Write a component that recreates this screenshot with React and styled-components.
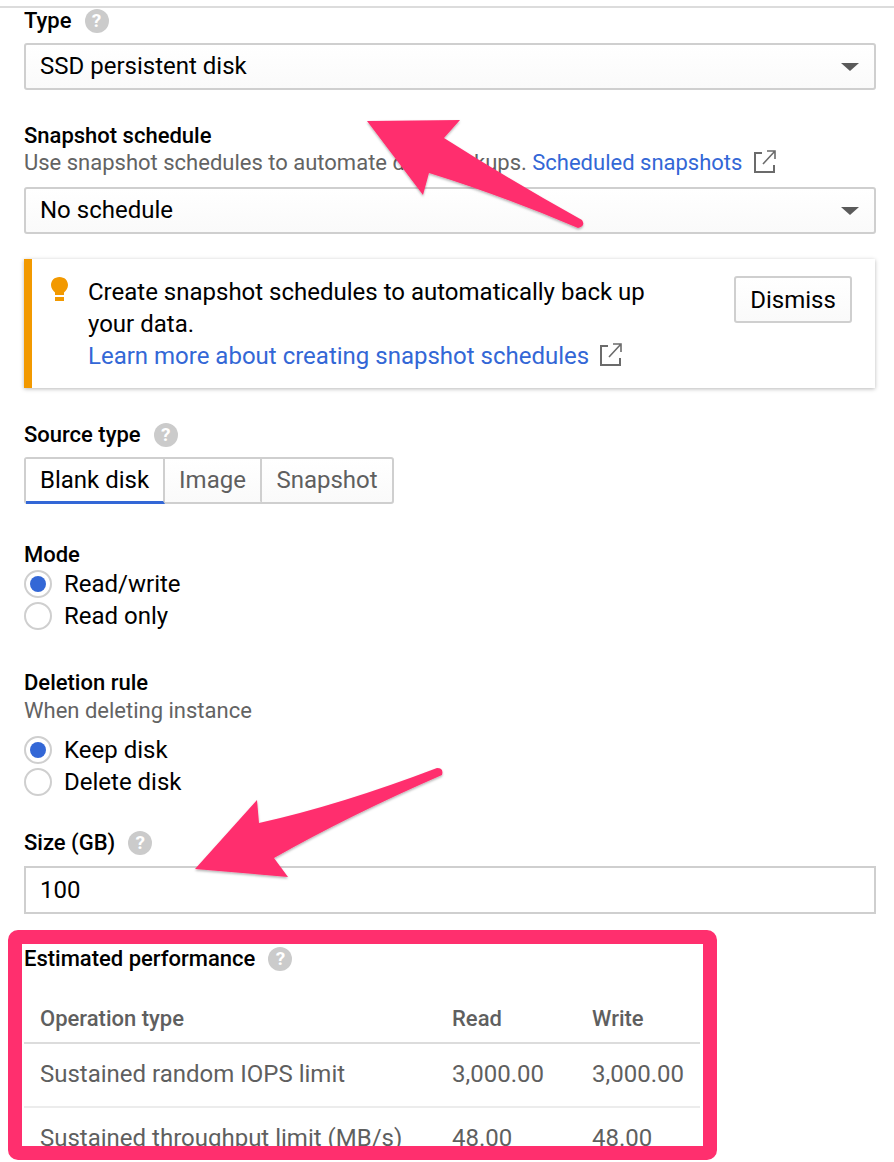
import React from 'react'
import styled, { createGlobalStyle } from 'styled-components'

const Global = createGlobalStyle`
  html, body {
    margin: 0;
    background: #fff;
    font-family: Roboto, "Liberation Sans", sans-serif;
    color: #000;
  }
  * { box-sizing: border-box; }
`

const Page = styled.div`
  position: relative;
  width: 894px;
  height: 1162px;
  overflow: hidden;
  padding: 6px 18px 0 24px;
  background: #fff;
`
const TopRule = styled.div`
  height: 2px;
  margin: 0 -18px 0 -24px;
  background: #dcdcdc;
`
const Section = styled.section`
  margin-top: ${(p) => p.$top || 0}px;
`
const Label = styled.div`
  display: flex;
  align-items: center;
  gap: 13px;
  height: 24px;
  padding-top: 1px;
  font-size: 22px;
  font-weight: 500;
  line-height: 24px;
`
const Help = styled.span`
  display: inline-flex;
  align-items: center;
  justify-content: center;
  width: 24px;
  height: 24px;
  border-radius: 50%;
  background: #cbcbcb;
  color: #fff;
  font-size: 19px;
  font-weight: 700;
`
const Hint = styled.div`
  display: flex;
  align-items: center;
  height: 28px;
  margin-top: ${(p) => p.$top || 0}px;
  padding-top: 2px;
  font-size: 22px;
  line-height: 26px;
  color: #636363;
`
const Link = styled.a`
  color: #3367d6;
`
const SelectBox = styled.div`
  position: relative;
  display: flex;
  align-items: center;
  height: 47px;
  margin-top: ${(p) => p.$top || 0}px;
  padding: 0 0 2px 14px;
  border: 2px solid #cfcfcf;
  border-radius: 3px;
  background: linear-gradient(#fff, #fafafa);
  font-size: 24px;
  &::after {
    content: '';
    position: absolute;
    right: 15px;
    top: 18px;
    border-left: 9px solid transparent;
    border-right: 9px solid transparent;
    border-top: 8px solid #5a5a5a;
  }
`
const Alert = styled.div`
  display: flex;
  justify-content: space-between;
  height: 129px;
  margin: 25px 1px 0 0;
  padding: 17px 23px 0 18px;
  background: #fff;
  border-left: 8px solid #f29900;
  box-shadow: 0 1px 4px rgba(0, 0, 0, 0.28);
`
const AlertBody = styled.div`
  display: flex;
  gap: 19px;
`
const Bulb = styled.svg`
  width: 19px;
  height: 26px;
  margin-top: 1px;
  flex: none;
`
const AlertText = styled.div`
  width: 590px;
  font-size: 24px;
  line-height: 32px;
`
const LinkLine = styled.div`
  display: flex;
  align-items: center;
  gap: 10px;
`
const OutIcon = styled.svg`
  width: 24px;
  height: 24px;
  margin-left: ${(p) => p.$left || 0}px;
  margin-top: -4px;
  flex: none;
`
const Dismiss = styled.button`
  width: 118px;
  height: 47px;
  border: 2px solid #cfcfcf;
  border-radius: 3px;
  background: linear-gradient(#fff, #fafafa);
  font-family: inherit;
  font-size: 24px;
  color: #000;
  padding: 0;
`
const Tabs = styled.div`
  display: inline-flex;
  height: 47px;
  margin-top: 11px;
  border: 2px solid #cfcfcf;
  border-radius: 3px;
  background: linear-gradient(#fff, #fafafa);
`
const Tab = styled.div`
  display: flex;
  align-items: center;
  justify-content: center;
  width: ${(p) => p.$w}px;
  margin-bottom: -2px;
  font-size: 24px;
  color: ${(p) => (p.$active ? '#000' : '#5f5f5f')};
  border-right: ${(p) => (p.$last ? '0' : '2px solid #cfcfcf')};
  border-bottom: 3px solid ${(p) => (p.$active ? '#3367d6' : 'transparent')};
  ${(p) => p.$active && 'background: #fff;'}
`
const RadioList = styled.div`
  display: flex;
  flex-direction: column;
  gap: 4px;
  margin-top: ${(p) => p.$top || 0}px;
`
const RadioRow = styled.div`
  display: flex;
  align-items: center;
  gap: 12px;
  height: 28px;
  font-size: 24px;
`
const RadioDot = styled.span`
  display: flex;
  align-items: center;
  justify-content: center;
  width: 28px;
  height: 28px;
  border: 2px solid #cfcfcf;
  border-radius: 50%;
  &::after {
    content: '';
    display: ${(p) => (p.$on ? 'block' : 'none')};
    width: 16px;
    height: 16px;
    border-radius: 50%;
    background: #3367d6;
  }
`
const TextBox = styled.div`
  display: flex;
  align-items: center;
  height: 48px;
  margin-top: 12px;
  padding-left: 14px;
  border: 2px solid #cfcfcf;
  font-size: 24px;
`
const Table = styled.table`
  width: 676px;
  margin-top: 23px;
  border-collapse: collapse;
  table-layout: fixed;
  font-size: 24px;
  color: #5f5f5f;
  th, td {
    padding: 0 0 0 16px;
    text-align: left;
    white-space: nowrap;
  }
  th {
    height: 50px;
    padding-top: 2px;
    font-size: 22px;
    font-weight: 500;
    border-bottom: 2px solid #dcdcdc;
  }
  td {
    height: 64px;
    padding-bottom: 2px;
    border-bottom: 2px solid #ececec;
  }
`
const Overlay = styled.svg`
  position: absolute;
  left: 0;
  top: 0;
  width: 894px;
  height: 1162px;
  pointer-events: none;
`

const OutLink = ({ left }) => (
  <OutIcon $left={left} viewBox="0 0 24 24" fill="none" stroke="#6b6b6b" strokeWidth="2">
    <path d="M9 4H2v19h19v-7" />
    <path d="M10 15L22 2M14 2h8v8" strokeWidth="1.6" />
  </OutIcon>
)

const rows = [
  ['Sustained random IOPS limit', '3,000.00', '3,000.00'],
  ['Sustained throughput limit (MB/s)', '48.00', '48.00'],
]

const App = () => {
  return (
    <Page>
      <Global />
      <TopRule />
      <Section>
        <Label>Type <Help>?</Help></Label>
        <SelectBox $top={11}>SSD persistent disk</SelectBox>
      </Section>
      <Section $top={33}>
        <Label>Snapshot schedule</Label>
        <Hint $top={1}>
          Use snapshot schedules to automate disk backups.&nbsp;<Link>Scheduled snapshots</Link>
          <OutLink left={11} />
        </Hint>
        <SelectBox $top={11}>No schedule</SelectBox>
      </Section>
      <Alert>
        <AlertBody>
          <Bulb viewBox="0 0 19 26">
            <path d="M9.5 0C4.300 0 1 3.600 1 8c0 3.200 2 5.600 4 7.500V18h9v-2.500c2-1.900 4-4.300 4-7.500 0-4.400-3.300-8-8.500-8z" fill="#f29900" />
            <rect x="5" y="20" width="9" height="4" fill="#f29900" />
          </Bulb>
          <AlertText>
            Create snapshot schedules to automatically back up your data.
            <LinkLine>
              <Link>Learn more about creating snapshot schedules</Link>
              <OutLink />
            </LinkLine>
          </AlertText>
        </AlertBody>
        <Dismiss>Dismiss</Dismiss>
      </Alert>
      <Section $top={34}>
        <Label>Source type <Help>?</Help></Label>
        <Tabs>
          <Tab $w={139} $active>Blank disk</Tab>
          <Tab $w={97}>Image</Tab>
          <Tab $w={130} $last>Snapshot</Tab>
        </Tabs>
      </Section>
      <Section $top={38}>
        <Label>Mode</Label>
        <RadioList $top={4}>
          <RadioRow><RadioDot $on />Read/write</RadioRow>
          <RadioRow><RadioDot />Read only</RadioRow>
        </RadioList>
      </Section>
      <Section $top={40}>
        <Label>Deletion rule</Label>
        <Hint $top={2}>When deleting instance</Hint>
        <RadioList $top={12}>
          <RadioRow><RadioDot $on />Keep disk</RadioRow>
          <RadioRow><RadioDot />Delete disk</RadioRow>
        </RadioList>
      </Section>
      <Section $top={34}>
        <Label>Size (GB) <Help>?</Help></Label>
        <TextBox>100</TextBox>
      </Section>
      <Section $top={32}>
        <Label>Estimated performance <Help>?</Help></Label>
        <Table>
          <colgroup>
            <col style={{ width: 412 }} />
            <col style={{ width: 140 }} />
            <col style={{ width: 124 }} />
          </colgroup>
          <thead>
            <tr><th>Operation type</th><th>Read</th><th>Write</th></tr>
          </thead>
          <tbody>
            {rows.map((r) => (
              <tr key={r[0]}>
                <td>{r[0]}</td><td>{r[1]}</td><td>{r[2]}</td>
              </tr>
            ))}
          </tbody>
        </Table>
      </Section>
      <Overlay viewBox="0 0 894 1162">
        <defs>
          <filter id="sh" x="-10%" y="-10%" width="120%" height="120%">
            <feDropShadow dx="0" dy="1.500" stdDeviation="1" floodColor="#000" floodOpacity="0.3" />
          </filter>
        </defs>
        <path
          d="M367 121L460 120L444 138Q510 180 582 220Q586 226 578 228Q500 195 429 173L423 195Z"
          fill="#ff2f6e"
          filter="url(#sh)"
        />
        <path
          d="M257 800L259 823Q340 805 437 768Q444 768 442 775Q350 815 274 858L288 877L195 869Z"
          fill="#ff2f6e"
          filter="url(#sh)"
        />
        <rect x="15" y="937" width="695" height="216" rx="3" fill="none" stroke="#ff2f6e" strokeWidth="14" />
      </Overlay>
    </Page>
  )
}

export default App
